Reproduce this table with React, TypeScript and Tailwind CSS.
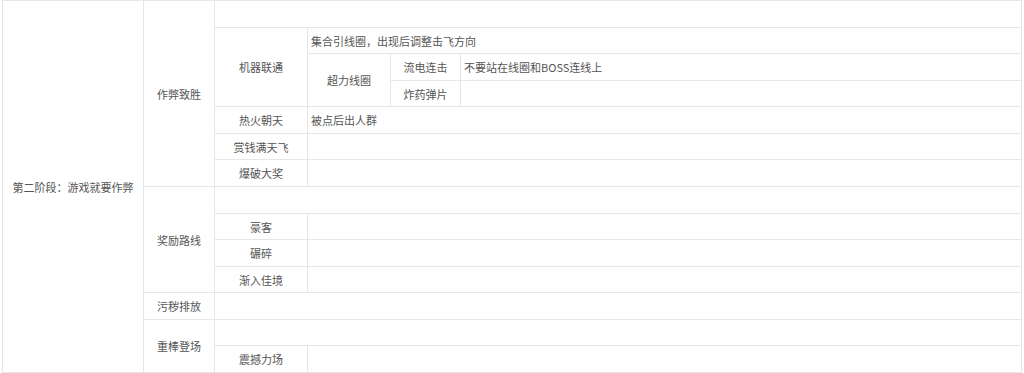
type Cell = {
  text?: string;
  col: string;
  row: string;
  align?: "center" | "left";
};

// grid lines follow the screenshot: 6 columns, 14 rows
const cells: Cell[] = [
  { text: "第二阶段：游戏就要作弊", col: "col-start-1", row: "row-start-1 row-span-14" },

  { text: "作弊致胜", col: "col-start-2", row: "row-start-1 row-span-7" },
  { col: "col-start-3 col-span-4", row: "row-start-1" },
  { text: "机器联通", col: "col-start-3", row: "row-start-2 row-span-3" },
  { text: "集合引线圈，出现后调整击飞方向", col: "col-start-4 col-span-3", row: "row-start-2", align: "left" },
  { text: "超力线圈", col: "col-start-4", row: "row-start-3 row-span-2" },
  { text: "流电连击", col: "col-start-5", row: "row-start-3" },
  { text: "不要站在线圈和BOSS连线上", col: "col-start-6", row: "row-start-3", align: "left" },
  { text: "炸药弹片", col: "col-start-5", row: "row-start-4" },
  { col: "col-start-6", row: "row-start-4" },
  { text: "热火朝天", col: "col-start-3", row: "row-start-5" },
  { text: "被点后出人群", col: "col-start-4 col-span-3", row: "row-start-5", align: "left" },
  { text: "赏钱满天飞", col: "col-start-3", row: "row-start-6" },
  { col: "col-start-4 col-span-3", row: "row-start-6" },
  { text: "爆破大奖", col: "col-start-3", row: "row-start-7" },
  { col: "col-start-4 col-span-3", row: "row-start-7" },

  { text: "奖励路线", col: "col-start-2", row: "row-start-8 row-span-4" },
  { col: "col-start-3 col-span-4", row: "row-start-8" },
  { text: "豪客", col: "col-start-3", row: "row-start-9" },
  { col: "col-start-4 col-span-3", row: "row-start-9" },
  { text: "碾碎", col: "col-start-3", row: "row-start-10" },
  { col: "col-start-4 col-span-3", row: "row-start-10" },
  { text: "渐入佳境", col: "col-start-3", row: "row-start-11" },
  { col: "col-start-4 col-span-3", row: "row-start-11" },

  { text: "污秽排放", col: "col-start-2", row: "row-start-12" },
  { col: "col-start-3 col-span-4", row: "row-start-12" },

  { text: "重棒登场", col: "col-start-2", row: "row-start-13 row-span-2" },
  { col: "col-start-3 col-span-4", row: "row-start-13" },
  { text: "震撼力场", col: "col-start-3", row: "row-start-14" },
  { col: "col-start-4 col-span-3", row: "row-start-14" },
];

export default function App() {
  return (
    <main
      className="min-h-screen bg-white text-[11px] text-[#555]"
      style={{ fontFamily: '"Noto Sans CJK SC", "Noto Sans", sans-serif' }}
    >
      <div className="ml-[2px] w-[1020px] grid gap-px p-px bg-[#e6e6e6] grid-cols-[140px_70px_92px_82px_69px_560px] grid-rows-[26px_25px_26px_25px_26px_25px_26px_26px_25px_26px_25px_26px_25px_26px]">
        {cells.map((c, i) => (
          <div
            key={i}
            className={`${c.col} ${c.row} bg-white flex items-center ${
              c.align === "left" ? "justify-start pl-[3px]" : "justify-center"
            } leading-none whitespace-nowrap pt-px`}
          >
            {c.text}
          </div>
        ))}
      </div>
    </main>
  );
}
